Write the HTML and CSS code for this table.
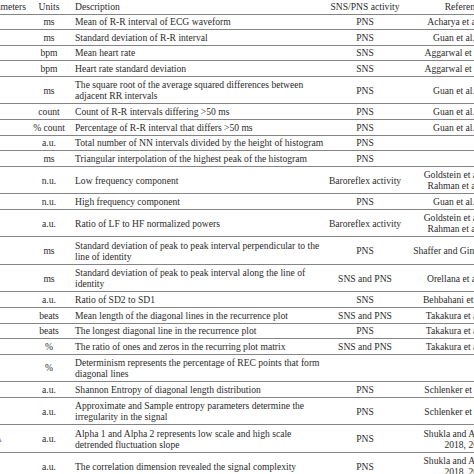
FILE: index.html
```html
<!DOCTYPE html>
<html>
<head>
<meta charset="utf-8">
<link rel="stylesheet" href="styles.css">
</head>
<body>
<table class="hrv">
<colgroup>
<col class="c-par"><col class="c-unit"><col class="c-desc"><col class="c-act"><col class="c-ref">
</colgroup>
<thead>
<tr class="hd"><th class="par">Parameters</th><th>Units</th><th class="desc">Description</th><th>SNS/PNS activity</th><th>References</th></tr>
</thead>
<tbody>
<tr class="s"><td class="par"></td><td>ms</td><td class="desc">Mean of R-R interval of ECG waveform</td><td>PNS</td><td>Acharya et al., 2006</td></tr>
<tr class="s"><td class="par"></td><td>ms</td><td class="desc">Standard deviation of R-R interval</td><td>PNS</td><td>Guan et al., 2018</td></tr>
<tr class="s"><td class="par"></td><td>bpm</td><td class="desc">Mean heart rate</td><td>SNS</td><td>Aggarwal et al., 2020</td></tr>
<tr class="s"><td class="par"></td><td>bpm</td><td class="desc">Heart rate standard deviation</td><td>SNS</td><td>Aggarwal et al., 2020</td></tr>
<tr class="d"><td class="par"></td><td>ms</td><td class="desc">The square root of the average squared differences between<br>adjacent RR intervals</td><td>PNS</td><td>Guan et al., 2018</td></tr>
<tr class="s"><td class="par"></td><td>count</td><td class="desc">Count of R-R intervals differing &gt;50 ms</td><td>PNS</td><td>Guan et al., 2018</td></tr>
<tr class="s"><td class="par"></td><td>% count</td><td class="desc">Percentage of R-R interval that differs &gt;50 ms</td><td>PNS</td><td>Guan et al., 2018</td></tr>
<tr class="s"><td class="par"></td><td>a.u.</td><td class="desc">Total number of NN intervals divided by the height of histogram</td><td>PNS</td><td></td></tr>
<tr class="s"><td class="par"></td><td>ms</td><td class="desc">Triangular interpolation of the highest peak of the histogram</td><td>PNS</td><td></td></tr>
<tr class="d"><td class="par"></td><td>n.u.</td><td class="desc">Low frequency component</td><td>Baroreflex activity</td><td>Goldstein et al., 2011;<br>Rahman et al., 2018</td></tr>
<tr class="s"><td class="par"></td><td>n.u.</td><td class="desc">High frequency component</td><td>PNS</td><td>Guan et al., 2018</td></tr>
<tr class="d"><td class="par"></td><td>a.u.</td><td class="desc">Ratio of LF to HF normalized powers</td><td>Baroreflex activity</td><td>Goldstein et al., 2011;<br>Rahman et al., 2018</td></tr>
<tr class="d"><td class="par"></td><td>ms</td><td class="desc">Standard deviation of peak to peak interval perpendicular to the<br>line of identity</td><td>PNS</td><td>Shaffer and Ginsberg, 2017</td></tr>
<tr class="d"><td class="par"></td><td>ms</td><td class="desc">Standard deviation of peak to peak interval along the line of<br>identity</td><td>SNS and PNS</td><td>Orellana et al., 2015</td></tr>
<tr class="s"><td class="par"></td><td>a.u.</td><td class="desc">Ratio of SD2 to SD1</td><td>SNS</td><td>Behbahani et al., 2018</td></tr>
<tr class="s"><td class="par"></td><td>beats</td><td class="desc">Mean length of the diagonal lines in the recurrence plot</td><td>SNS and PNS</td><td>Takakura et al., 2017</td></tr>
<tr class="s"><td class="par"></td><td>beats</td><td class="desc">The longest diagonal line in the recurrence plot</td><td>PNS</td><td>Takakura et al., 2017</td></tr>
<tr class="s"><td class="par"></td><td>%</td><td class="desc">The ratio of ones and zeros in the recurring plot matrix</td><td>SNS and PNS</td><td>Takakura et al., 2017</td></tr>
<tr class="d"><td class="par"></td><td>%</td><td class="desc">Determinism represents the percentage of REC points that form<br>diagonal lines</td><td></td><td></td></tr>
<tr class="s"><td class="par"></td><td>a.u.</td><td class="desc">Shannon Entropy of diagonal length distribution</td><td>PNS</td><td>Schlenker et al., 2016</td></tr>
<tr class="d"><td class="par"></td><td>a.u.</td><td class="desc">Approximate and Sample entropy parameters determine the<br>irregularity in the signal</td><td>PNS</td><td>Schlenker et al., 2016</td></tr>
<tr class="d"><td class="par">DFA</td><td>a.u.</td><td class="desc">Alpha 1 and Alpha 2 represents low scale and high scale<br>detrended fluctuation slope</td><td>PNS</td><td>Shukla and Aggarwal,<br>2018, 2019</td></tr>
<tr class="d"><td class="par"></td><td>a.u.</td><td class="desc">The correlation dimension revealed the signal complexity</td><td>PNS</td><td>Shukla and Aggarwal,<br>2018, 2019</td></tr>
</tbody>
</table>
</body>
</html>
```

FILE: styles.css
```css
html, body {
  margin: 0;
  padding: 0;
  background: #ffffff;
  overflow: hidden;
  width: 474px;
  height: 474px;
}
.hrv {
  border-collapse: collapse;
  table-layout: fixed;
  width: 564px;
  margin-left: -40px;
  font-family: "Liberation Serif", "Times New Roman", serif;
  font-size: 9.6px;
  line-height: 11px;
  color: #2b2b2b;
}
.c-par { width: 70px; }
.c-unit { width: 38px; }
.c-desc { width: 254px; }
.c-act { width: 86px; }
.c-ref { width: 116px; }
.hrv th, .hrv td {
  padding: 0;
  text-align: center;
  vertical-align: middle;
  white-space: nowrap;
  overflow: visible;
  font-weight: normal;
}
.hrv tr {
  border-bottom: 1px solid #858585;
}
.hrv .desc {
  text-align: left;
  padding-left: 7px;
}
.hrv .par {
  text-align: right;
  padding-right: 4px;
  overflow: hidden;
}
.hrv td.par {
  padding-right: 28px;
  color: #888888;
}
.hd { height: 14px; }
.s { height: 15.6px; }
.d { height: 27.5px; }
```
